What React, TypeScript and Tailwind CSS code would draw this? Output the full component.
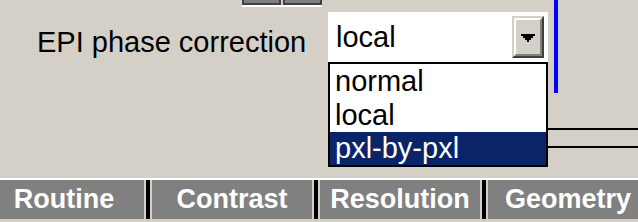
import type { ReactNode } from 'react'

const tabs = ['Contrast', 'Resolution', 'Geometry']

function Tab({ children, className }: { children: ReactNode; className: string }) {
    return (
        <div className={`h-full bg-[#808080] flex items-center justify-center shrink-0 ${className}`}>
            <span className="text-white text-[27px] font-bold leading-none">{children}</span>
        </div>
    )
}

function Divider() {
    return <div className="h-full w-[8px] shrink-0 border-x-2 border-[#d4d0c8] bg-black" />
}

function ArrowButton() {
    return (
        <div className="w-[32px] h-[42px] border-2 border-t-[#d4d0c8] border-l-[#d4d0c8] border-b-[#404040] border-r-[#404040]">
            <div className="w-full h-full border-2 border-t-white border-l-white border-b-[#808080] border-r-[#808080] bg-[#d4d0c8] flex items-center justify-center">
                <svg width="14" height="8" viewBox="0 0 14 8" className="mt-[2px]">
                    <rect x="0" y="0" width="14" height="2" fill="#000" />
                    <rect x="2" y="2" width="10" height="2" fill="#000" />
                    <rect x="4" y="4" width="6" height="2" fill="#000" />
                    <rect x="6" y="6" width="2" height="2" fill="#000" />
                </svg>
            </div>
        </div>
    )
}

export default function App() {
    const options = ['normal', 'local', 'pxl-by-pxl']
    const selected = 2

    return (
        <div
            className="w-[638px] h-[222px] bg-[#d4d0c8] overflow-hidden flex flex-col text-black"
            style={{ fontFamily: '"Liberation Sans", Arial, sans-serif' }}
        >
            {/* upper panel */}
            <div className="h-[178px] flex">
                <div className="w-[548px] shrink-0 flex flex-col">
                    {/* partially visible buttons */}
                    <div className="h-[7px] pl-[242px] flex">
                        <div className="w-[80px] flex flex-col">
                            <div className="h-[5px] flex gap-[2px]">
                                <div className="w-[39px] bg-[#808080] border-x-2 border-b-2 border-[#404040]" />
                                <div className="w-[39px] bg-[#808080] border-x-2 border-b-2 border-[#404040]" />
                            </div>
                            <div className="h-[2px] bg-white" />
                        </div>
                    </div>

                    {/* label + combo */}
                    <div className="mt-[5px] flex items-start h-[50px]">
                        <div className="w-[328px] pl-[37px] mt-[16px] text-[29px] leading-[29px] whitespace-nowrap">
                            EPI phase correction
                        </div>
                        <div className="w-[220px] h-[50px] bg-white flex items-center justify-between">
                            <span className="pl-[8px] text-[29px] leading-[29px]">local</span>
                            <div className="mr-[4px]">
                                <ArrowButton />
                            </div>
                        </div>
                    </div>

                    {/* open list */}
                    <div className="ml-[328px] w-[220px] h-[105px] border-2 border-black bg-white flex flex-col">
                        {options.map((opt, i) => (
                            <div
                                key={opt}
                                className={`${i === 2 ? 'h-[33px]' : 'h-[34px]'} flex items-center pl-[5px] text-[29px] leading-[29px] ${
                                    i === selected ? 'bg-[#0a246a] text-white' : ''
                                }`}
                            >
                                {opt}
                            </div>
                        ))}
                    </div>
                </div>

                {/* right side lines */}
                <div className="flex-1 flex flex-col">
                    <div className="ml-[6px] w-[4px] h-[93px] bg-[#0000ff]" />
                    <div className="mt-[35px] h-[2px] bg-black" />
                    <div className="mt-[16px] h-[2px] bg-black" />
                </div>
            </div>

            <div className="h-[2px] bg-white" />

            {/* tab strip */}
            <div className="h-[39px] flex">
                <Tab className="w-[160px] -ml-[16px]">Routine</Tab>
                {tabs.map((t) => (
                    <div key={t} className="h-full flex">
                        <Divider />
                        <Tab className="w-[160px]">{t}</Tab>
                    </div>
                ))}
            </div>
        </div>
    )
}
